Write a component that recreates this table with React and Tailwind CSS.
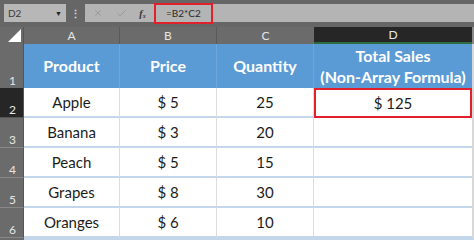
import { X, Check } from 'lucide-react'

const rows = [
  { n: 2, product: 'Apple', price: '$ 5', qty: '25', total: '$ 125' },
  { n: 3, product: 'Banana', price: '$ 3', qty: '20', total: '' },
  { n: 4, product: 'Peach', price: '$ 5', qty: '15', total: '' },
  { n: 5, product: 'Grapes', price: '$ 8', qty: '30', total: '' },
  { n: 6, product: 'Oranges', price: '$ 6', qty: '10', total: '' },
]

const font = { fontFamily: 'Lato, "Open Sans", sans-serif' }

export default function App() {
  return (
    <div className="h-[240px] w-[474px] overflow-hidden bg-[#6b6b6b] text-[15px]" style={font}>
      {/* formula bar */}
      <div className="flex h-[27px] items-start bg-[#666666] pt-[4px]">
        <div className="ml-[4px] flex h-[18px] w-[62px] items-center justify-between bg-[#b7b7b7] px-[4px] text-[10px] text-[#3a3a3a]">
          <span>D2</span>
          <span className="text-[7px] text-[#222]">▼</span>
        </div>
        <div className="flex h-[18px] w-[19px] items-center justify-center text-[11px] font-bold leading-none text-[#d8d8d8]">⋮</div>
        <div className="flex h-[18px] flex-1 items-center bg-[#b4b4b4]">
          <div className="flex w-[67px] items-center justify-around pl-[2px] text-[#8a8a8a]">
            <X size={10} strokeWidth={1.5} />
            <Check size={11} strokeWidth={1.5} />
            <span className="text-[10px] font-semibold italic text-[#333]" style={{ fontFamily: '"Liberation Serif", serif' }}>
              f<sub className="text-[6px]">x</sub>
            </span>
          </div>
          <div className="ml-[2px] flex h-[21px] w-[59px] items-center border-2 border-[#e0202a] pl-[10px] text-[10px] text-[#2a2a2a]">
            =B2*C2
          </div>
        </div>
      </div>

      {/* column headers */}
      <div className="flex h-[17px] text-[12px] leading-none text-[#e6e6e6]">
        <div className="relative w-[24px] border-r border-[#555]">
          <div
            className="absolute bottom-[2px] right-[2px] h-[13px] w-[13px] bg-white"
            style={{ clipPath: 'polygon(100% 0, 100% 100%, 0 100%)' }}
          />
        </div>
        <div className="flex w-[96px] items-center justify-center border-r border-[#5a5a5a]">A</div>
        <div className="flex w-[97px] items-center justify-center border-r border-[#5a5a5a]">B</div>
        <div className="flex w-[97px] items-center justify-center">C</div>
        <div className="flex w-[158px] items-center justify-center border-b-2 border-[#2e6b3f] bg-[#262626]">D</div>
        <div className="w-[2px] bg-[#8a8a8a]" />
      </div>

      {/* header row */}
      <div className="flex h-[44px]">
        <div className="flex w-[24px] items-end border-r border-[#555] pb-[1px] pl-[9px] text-[12px] leading-none text-[#e6e6e6]">1</div>
        <div className="flex w-[96px] items-center justify-center border-r border-[#6fa6d9] bg-[#5b9bd5] text-[16px] font-bold text-white">Product</div>
        <div className="flex w-[97px] items-center justify-center border-r border-[#6fa6d9] bg-[#5b9bd5] text-[16px] font-bold text-white">Price</div>
        <div className="flex w-[97px] items-center justify-center border-r border-[#6fa6d9] bg-[#5b9bd5] text-[16px] font-bold text-white">Quantity</div>
        <div className="flex w-[158px] flex-col items-center justify-center bg-[#5b9bd5] text-[16px] font-bold leading-[21px] text-white">
          <span>Total Sales</span>
          <span>(Non-Array Formula)</span>
        </div>
        <div className="w-[2px] bg-[#d8d8d8]" />
      </div>

      {/* data rows */}
      {rows.map((r) => (
        <div key={r.n} className="flex h-[30px]">
          <div
            className={`flex w-[24px] items-end border-b border-r pb-[1px] pl-[9px] text-[12px] leading-none text-[#e6e6e6] ${
              r.n === 2 ? 'border-b-[#555] border-r-[#2e6b3f] bg-[#262626]' : 'border-b-[#888] border-r-[#555] bg-[#6b6b6b]'
            }`}
          >
            {r.n}
          </div>
          <div className="flex w-[96px] items-center justify-center border-b-2 border-r border-b-[#c4d6ea] border-r-[#dcdcdc] bg-white text-[#1c1c1c]">{r.product}</div>
          <div className="flex w-[97px] items-center justify-center border-b-2 border-r border-b-[#c4d6ea] border-r-[#dcdcdc] bg-white text-[#1c1c1c]">{r.price}</div>
          <div className="flex w-[97px] items-center justify-center border-b-2 border-r border-b-[#c4d6ea] border-r-[#dcdcdc] bg-white text-[#1c1c1c]">{r.qty}</div>
          <div
            className={`flex w-[158px] items-center justify-center bg-white text-[#1c1c1c] ${
              r.n === 2 ? 'border-2 border-[#e0202a]' : 'border-b-2 border-b-[#c4d6ea]'
            }`}
          >
            {r.total}
          </div>
          <div className="w-[2px] bg-[#d8d8d8]" />
        </div>
      ))}
      <div className="flex h-[2px]">
        <div className="w-[24px] bg-[#6b6b6b]" />
        <div className="flex-1 bg-[#c4d6ea]" />
      </div>
    </div>
  )
}
